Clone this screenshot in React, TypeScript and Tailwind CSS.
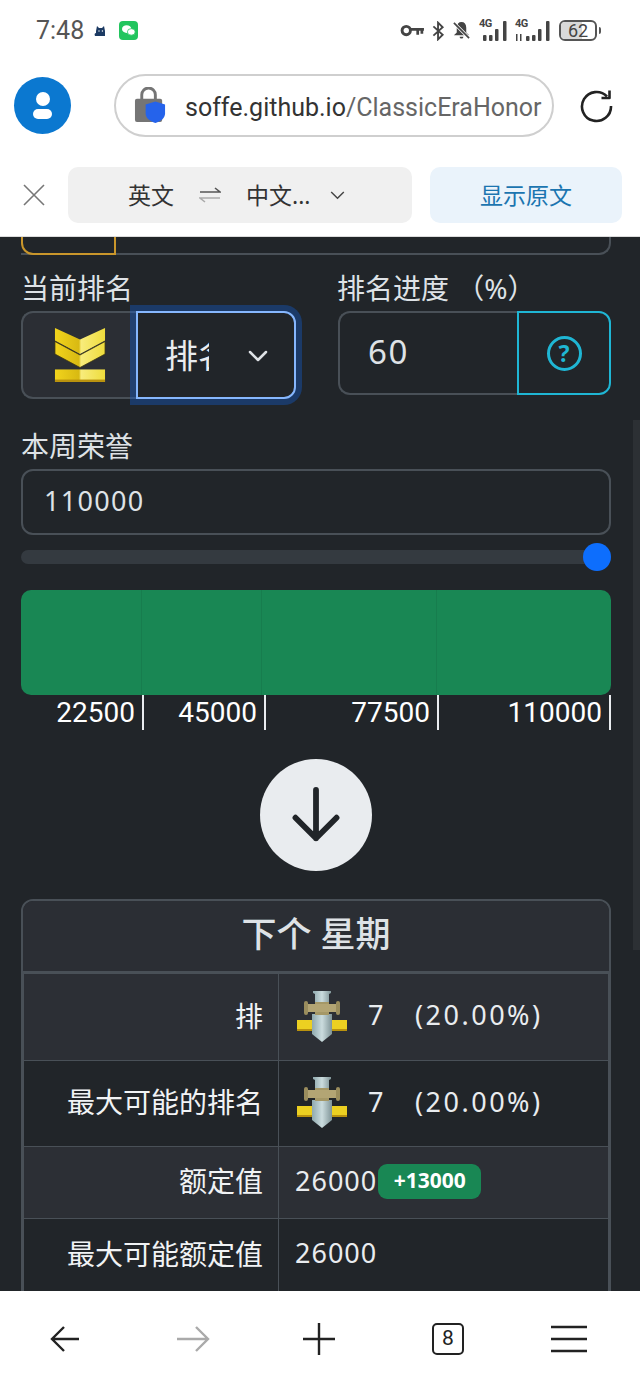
const cjk = "font-['Noto_Sans','Noto_Sans_CJK_SC',sans-serif]";

const SignalIcon = ({ second }: { second?: boolean }) => (
  <div className={`relative h-[22px] ${second ? 'w-[36px]' : 'w-[29px]'}`}>
    <span className="absolute left-0 -top-[3px] text-[11px] leading-[13px] font-bold tracking-[-0.5px] text-[#444] font-['Roboto',sans-serif]">4G</span>
    <svg viewBox={second ? '0 0 36 22' : '0 0 29 22'} className={`absolute inset-0 h-[22px] ${second ? 'w-[36px]' : 'w-[29px]'}`} fill="#444">
      {second ? (
        <>
          <path d="M1 14h1.500v7H1zM5 14h1.500v7H5z" />
          <rect x="11" y="16" width="3.500" height="5" rx="1" />
          <rect x="17" y="15" width="3.500" height="6" rx="1" />
          <rect x="23" y="9" width="3.500" height="12" rx="1" />
          <rect x="31" y="1" width="3.500" height="20" rx="1" />
        </>
      ) : (
        <>
          <rect x="4" y="15" width="3.500" height="6" rx="1" />
          <rect x="10" y="15" width="3.500" height="6" rx="1" />
          <rect x="16" y="9" width="3.500" height="12" rx="1" />
          <rect x="24" y="1" width="3.500" height="20" rx="1" />
        </>
      )}
    </svg>
  </div>
);

const StatusBar = () => (
  <div className="h-[60px] flex items-center pl-[36px] pr-[39px] pt-[1px] shrink-0">
    <span className="text-[25px] leading-none text-[#555] font-['Roboto',sans-serif] w-[58px]">7:48</span>
    <svg viewBox="0 0 14 12" className="w-[14px] h-[12px]">
      <path d="M1 11c-1-2 0-3 1-3V6L3 1l2 2h3l2-2 1 5v5z" fill="#1c3a63" />
      <circle cx="5" cy="6" r=".7" fill="#fff" />
      <circle cx="8.400" cy="6" r=".7" fill="#fff" />
    </svg>
    <div className="ml-[11px] w-[19px] h-[19px] rounded-[4px] bg-[#22c55e] flex items-center justify-center">
      <svg viewBox="0 0 16 14" className="w-[15px] h-[13px]" fill="#fff">
        <ellipse cx="6" cy="5.500" rx="5" ry="4.200" />
        <ellipse cx="11" cy="8.500" rx="4.200" ry="3.500" stroke="#22c55e" strokeWidth=".8" />
      </svg>
    </div>
    <div className="ml-auto flex items-center">
      <svg viewBox="0 0 24 14" className="w-[25px] h-[15px]" fill="none" stroke="#444">
        <circle cx="6" cy="7" r="4" strokeWidth="2.800" />
        <path d="M10 6h13M17 6v5M21 6v4" strokeWidth="2.600" />
      </svg>
      <svg viewBox="0 0 14 20" className="ml-[7px] w-[13px] h-[20px]" fill="none" stroke="#444" strokeWidth="2">
        <path d="M1.500 5l10 9-5 5V1l5 5-10 9" />
      </svg>
      <svg viewBox="0 0 20 20" className="ml-[7px] w-[19px] h-[19px]" fill="#444">
        <path d="M10 1c-3 0-5 2-5 6v5l-3 3h16l-3-3V7c0-4-2-6-5-6zM8 16.500h4a2 2 0 0 1-4 0z" />
        <path d="M1 1l18 18" stroke="#fff" strokeWidth="3.500" />
        <path d="M2 2l16 16" stroke="#444" strokeWidth="1.800" />
      </svg>
      <div className="ml-[8px]"><SignalIcon /></div>
      <div className="ml-[7px]"><SignalIcon second /></div>
      <div className="ml-[8px] relative w-[38px] h-[21px] rounded-[6px] border-2 border-[#555] overflow-hidden flex items-center justify-center">
        <div className="absolute left-0 top-0 bottom-0 w-[62%] bg-[#d9d9d9]" />
        <span className="relative text-[18px] leading-none text-[#444] font-['Roboto',sans-serif]">62</span>
      </div>
      <div className="ml-[2px] w-[2px] h-[7px] rounded-r bg-[#555]" />
    </div>
  </div>
);

const UrlRow = () => (
  <div className="h-[95px] pt-[14px] pb-[18px] flex items-center shrink-0 pl-[14px]">
    <div className="w-[57px] h-[57px] rounded-full bg-[#0b78d0] flex flex-col items-center justify-center">
      <div className="w-[14px] h-[14px] rounded-full bg-white" />
      <div className="mt-[3px] w-[19px] h-[10px] rounded-full bg-white" />
    </div>
    <div className="ml-[43px] w-[440px] h-[63px] rounded-full border-2 border-[#cfcfcf] flex items-center pl-[18px]">
      <svg viewBox="0 0 34 38" className="w-[33px] h-[37px] shrink-0">
        <path d="M8 14V8a7 7 0 0 1 14 0v6" fill="none" stroke="#757575" strokeWidth="3" />
        <rect x="1" y="12" width="28" height="24" rx="2" fill="#757575" />
        <path d="M22 15l10 3v9c0 5-4 8-10 10-6-2-10-5-10-10v-9z" fill="#2563eb" />
      </svg>
      <span className="ml-[18px] pt-[3px] text-[25px] leading-none whitespace-nowrap text-[#333] font-['Roboto',sans-serif]">
        soffe.github.io<span className="text-[#666]">/ClassicEraHonor</span>
      </span>
    </div>
    <svg viewBox="0 0 34 34" className="ml-[26px] w-[34px] h-[34px]" fill="none" stroke="#222" strokeWidth="2.600">
      <path d="M27 7.500A14.500 14.500 0 1 0 31 17" />
      <path d="M29.500 1.500v7.500h-8" strokeLinejoin="round" />
    </svg>
  </div>
);

const TranslateRow = () => (
  <div className="h-[82px] flex items-start pt-[12px] shrink-0 border-b border-[#dcdcdc]">
    <div className="w-[68px] h-[56px] flex items-center justify-center">
      <svg viewBox="0 0 24 24" className="w-[24px] h-[24px]" stroke="#777" strokeWidth="1.600">
        <path d="M2 2l20 20M22 2L2 22" />
      </svg>
    </div>
    <div className={`w-[344px] h-[56px] rounded-[10px] bg-[#f0f0f0] flex items-center pl-[60px] text-[23px] text-[#333] ${cjk}`}>
      <span>英文</span>
      <svg viewBox="0 0 22 16" className="ml-[25px] w-[22px] h-[16px]" fill="none" strokeWidth="1.600">
        <path d="M1 5h20l-5-4" stroke="#555" />
        <path d="M21 11H1l5 4" stroke="#aaa" />
      </svg>
      <span className="ml-[25px] whitespace-nowrap">中文...</span>
      <svg viewBox="0 0 16 10" className="ml-[19px] w-[15px] h-[9px]" fill="none" stroke="#444" strokeWidth="1.600">
        <path d="M1 1l7 7 7-7" />
      </svg>
    </div>
    <div className={`ml-[18px] w-[192px] h-[56px] rounded-[10px] bg-[#eaf3fb] flex items-center justify-center text-[23px] text-[#1b75b0] ${cjk}`}>
      显示原文
    </div>
  </div>
);

const RankIcon = () => (
  <svg viewBox="0 0 54 56" className="w-[52px] h-[54px]">
    <defs>
      <linearGradient id="gold" x1="0" x2="1" y1="0" y2="0">
        <stop offset="0" stopColor="#f2d41c" />
        <stop offset=".48" stopColor="#d8b912" />
        <stop offset=".52" stopColor="#f8ec7c" />
        <stop offset="1" stopColor="#eedc3c" />
      </linearGradient>
    </defs>
    <path d="M1 0l26 12L53 0v13L27 27 1 13z" fill="url(#gold)" />
    <path d="M1 14l26 14 26-14v13L27 41 1 27z" fill="url(#gold)" stroke="#3d3612" strokeWidth=".8" />
    <rect x="1" y="43" width="52" height="13" fill="url(#gold)" />
    <rect x="1" y="53.500" width="52" height="2.500" fill="#b9920e" />
  </svg>
);

const SwordIcon = () => (
  <svg viewBox="0 0 50 52" className="ml-[2px] w-[50px] h-[52px] shrink-0">
    <defs>
      <linearGradient id="steel" x1="0" x2="1" y1="0" y2="0">
        <stop offset="0" stopColor="#8fa9ae" />
        <stop offset=".5" stopColor="#cbdcde" />
        <stop offset="1" stopColor="#7f9497" />
      </linearGradient>
    </defs>
    <rect x="0" y="30" width="50" height="11" fill="#ecd021" />
    <rect x="0" y="39" width="50" height="2" fill="#b9920e" />
    <path d="M16 1h18v2l-2 1v9H18V4l-2-1z" fill="url(#steel)" />
    <path d="M15 24h20v20l-10 8-10-8z" fill="url(#steel)" />
    <path d="M18 12h14v13H18z" fill="#a59867" />
    <rect x="8" y="14" width="34" height="8" rx="3" fill="#b3a574" />
    <rect x="7" y="11" width="4" height="14" rx="2" fill="#9a8d5d" />
    <rect x="39" y="11" width="4" height="14" rx="2" fill="#9a8d5d" />
  </svg>
);

const Tick = ({ value, width }: { value: string; width: string }) => (
  <div className={`${width} h-[35px] border-r-2 border-[#e9ecef] text-right pr-[7px] text-[28px] leading-[36px] text-white font-['Roboto',sans-serif]`}>
    {value}
  </div>
);

const rowLabel = `text-right pr-[15px] pb-[3px] text-[28px] text-[#f1f3f5] border border-[#495057] ${cjk}`;
const rowValue = "pl-[16px] pb-[3px] text-[27px] text-[#e9ecef] border border-[#495057] tracking-[1px] font-['Noto_Sans',sans-serif]";

const RankValue = () => (
  <div className="flex items-center">
    <SwordIcon />
    <span className="ml-[21px] w-[47px]">7</span>
    <span className="whitespace-nowrap tracking-[2.500px]">(20.00%)</span>
  </div>
);

const Page = () => (
  <div className={`relative flex-1 bg-[#212529] pl-[21px] pr-[29px] overflow-hidden ${cjk}`}>
    {/* scrolled-off field at the top */}
    <div className="h-[18px] flex border-b-2 border-r-2 border-[#495057] rounded-br-[12px]">
      <div className="w-[95px] border-l-2 border-b-2 border-r-2 border-[#c9962b] rounded-bl-[12px] -mb-[2px]" />
    </div>

    <div className="mt-[14px] flex">
      <div className="w-[275px]">
        <div className="text-[28px] leading-[38px] text-[#dee2e6]">当前排名</div>
        <div className="mt-[4px] flex h-[88px]">
          <div className="w-[115px] bg-[#2b2e34] border-2 border-r-0 border-[#495057] rounded-l-[12px] flex items-center justify-center">
            <RankIcon />
          </div>
          <div className="relative w-[160px] border-2 border-[#86b7fe] rounded-r-[12px] bg-[#212529] ring-[6px] ring-[#0d6efd]/30 flex items-center pl-[27px]">
            <span className="w-[44px] overflow-hidden whitespace-nowrap text-[33px] text-[#e9ecef] leading-none">排名</span>
            <svg viewBox="0 0 20 12" className="absolute right-[26px] top-[37px] w-[20px] h-[12px]" fill="none" stroke="#dee2e6" strokeWidth="2.500" strokeLinecap="round" strokeLinejoin="round">
              <path d="M2 2l8 8 8-8" />
            </svg>
          </div>
        </div>
      </div>
      <div className="ml-[42px] w-[273px]">
        <div className="text-[28px] leading-[38px] text-[#dee2e6] whitespace-nowrap -ml-[1px]">排名进度 （%）</div>
        <div className="mt-[4px] flex h-[84px]">
          <div className="w-[179px] border-2 border-r-0 border-[#495057] rounded-l-[12px] flex items-center pl-[28px] pb-[2px] text-[33px] tracking-[1.500px] text-[#dee2e6] font-['Noto_Sans',sans-serif]">
            60
          </div>
          <div className="flex-1 border-2 border-[#1fb6d4] rounded-r-[12px] flex items-center justify-center">
            <div className="w-[35px] h-[35px] rounded-full border-[3px] border-[#1fb6d4] flex items-center justify-center text-[23px] leading-none font-bold text-[#1fb6d4] font-['Noto_Sans',sans-serif]">?</div>
          </div>
        </div>
      </div>
    </div>

    <div className="mt-[28px] text-[28px] leading-[38px] text-[#dee2e6]">本周荣誉</div>
    <div className="mt-[4px] h-[66px] border-2 border-[#495057] rounded-[12px] flex items-center pl-[21px] pb-[2px] text-[27px] tracking-[1.300px] text-[#dee2e6] font-['Noto_Sans',sans-serif]">
      110000
    </div>

    <div className="relative mt-[15px] h-[14px] rounded-full bg-[#343a40]">
      <div className="absolute right-0 -top-[7px] w-[28px] h-[28px] rounded-full bg-[#0d6efd]" />
    </div>

    <div className="mt-[26px] h-[105px] rounded-[10px] bg-[#198754] flex">
      <div className="w-[121px] border-r border-[#177d4e]" />
      <div className="w-[120px] border-r border-[#177d4e]" />
      <div className="w-[175px] border-r border-[#177d4e]" />
    </div>
    <div className="flex">
      <Tick value="22500" width="w-[123px]" />
      <Tick value="45000" width="w-[122px]" />
      <Tick value="77500" width="w-[173px]" />
      <Tick value="110000" width="w-[172px]" />
    </div>

    <div className="mt-[29px] mx-auto w-[112px] h-[112px] rounded-full bg-[#e9ecef] flex items-center justify-center">
      <svg viewBox="0 0 56 64" className="w-[50px] h-[58px]" fill="none" stroke="#212529" strokeWidth="6.500" strokeLinecap="round" strokeLinejoin="round">
        <path d="M28 4v54M5 35l23 23 23-23" />
      </svg>
    </div>

    <div className="mt-[28px] border-2 border-[#495057] rounded-t-[12px] overflow-hidden">
      <div className="h-[72px] pb-[3px] bg-[#2b2e34] flex items-center justify-center text-[35px] font-medium text-[#dee2e6] border-b-2 border-[#495057]">
        下个 星期
      </div>
      <table className="w-full table-fixed border-collapse">
        <tbody>
          <tr className="h-[87px] bg-[#2c2f35]">
            <td className={`w-[255px] ${rowLabel}`}>排</td>
            <td className={rowValue}><RankValue /></td>
          </tr>
          <tr className="h-[86px]">
            <td className={rowLabel}>最大可能的排名</td>
            <td className={rowValue}><RankValue /></td>
          </tr>
          <tr className="h-[72px] bg-[#2c2f35]">
            <td className={rowLabel}>额定值</td>
            <td className={rowValue}>
              <div className="flex items-center">
                <span>26000</span>
                <span className="ml-[1px] w-[103px] h-[35px] rounded-[9px] bg-[#198754] flex items-center justify-center text-[21px] font-bold tracking-normal text-white">+13000</span>
              </div>
            </td>
          </tr>
          <tr className="h-[73px]">
            <td className={rowLabel}>最大可能额定值</td>
            <td className={rowValue}>26000</td>
          </tr>
        </tbody>
      </table>
    </div>

    {/* page scrollbar */}
    <div className="absolute right-0 top-[183px] w-[7px] h-[530px] bg-white/5" />
  </div>
);

const BottomNav = () => (
  <div className="h-[95px] shrink-0 bg-white flex items-center pl-[50px]">
    <svg viewBox="0 0 30 30" className="w-[30px] h-[30px]" fill="none" stroke="#222" strokeWidth="2.400">
      <path d="M29 15H2M14 3L2 15l12 12" />
    </svg>
    <svg viewBox="0 0 34 30" className="ml-[96px] w-[34px] h-[30px]" fill="none" stroke="#aaa" strokeWidth="2.400">
      <path d="M1 15h31M20 3l12 12-12 12" />
    </svg>
    <svg viewBox="0 0 32 32" className="ml-[93px] w-[32px] h-[32px]" fill="none" stroke="#222" strokeWidth="2.400">
      <path d="M16 0v32M0 16h32" />
    </svg>
    <div className="ml-[97px] w-[32px] h-[32px] rounded-[5px] border-2 border-[#222] flex items-center justify-center text-[21px] leading-none text-[#222] font-['Roboto',sans-serif]">8</div>
    <svg viewBox="0 0 36 28" className="ml-[87px] w-[36px] h-[28px]" fill="none" stroke="#222" strokeWidth="2.600">
      <path d="M0 2h36M0 14h36M0 26h36" />
    </svg>
  </div>
);

export default function App() {
  return (
    <div className="w-[640px] h-[1386px] flex flex-col bg-white overflow-hidden">
      <StatusBar />
      <UrlRow />
      <TranslateRow />
      <Page />
      <BottomNav />
    </div>
  );
}
